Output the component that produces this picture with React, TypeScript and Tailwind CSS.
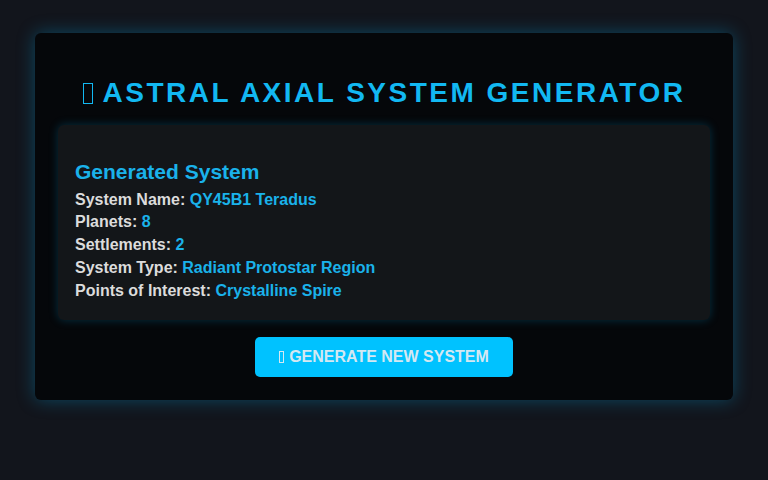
export default function App() {
  const rows = [
    { label: 'System Name:', value: 'QY45B1 Teradus' },
    { label: 'Planets:', value: '8' },
    { label: 'Settlements:', value: '2' },
    { label: 'System Type:', value: 'Radiant Protostar Region' },
    { label: 'Points of Interest:', value: 'Crystalline Spire' },
  ];

  return (
    <div className="min-h-[480px] w-[768px] bg-[#12151c] pt-[33px] font-['Liberation_Sans',Arial,sans-serif]">
      <div className="mx-auto w-[698px] rounded-[6px] bg-[#05070a] px-[23px] pt-[43px] pb-[23px] shadow-[0_0_18px_rgba(0,170,230,0.35)]">
        {/* Title */}
        <h1 className="flex h-[34px] items-center justify-center text-[28px] font-bold uppercase tracking-[2.5px] text-[#12b8f2]">
          <span className="mr-[10px] inline-block h-[21px] w-[10px] border-[1.5px] border-[#12b8f2]" />
          Astral Axial System Generator
        </h1>

        {/* Result panel */}
        <div className="mt-[15px] h-[195px] rounded-[6px] bg-[#131619] px-[17px] pt-[33px] shadow-[0_0_10px_rgba(0,170,230,0.25)]">
          <h2 className="h-[28px] text-[21px] leading-[28px] font-bold text-[#1ab2ea]">Generated System</h2>
          <div className="mt-[2.5px] text-[16px] leading-[22.75px] font-bold">
            {rows.map((r) => (
              <p key={r.label} className="text-[#dcdcdc]">
                {r.label} <span className="text-[#1ab2ea]">{r.value}</span>
              </p>
            ))}
          </div>
        </div>

        {/* Button */}
        <div className="mt-[17px] flex justify-center">
          <button className="flex h-[40px] w-[258px] items-center justify-center rounded-[5px] bg-[#00c2ff] text-[16px] font-bold uppercase text-[#d4e8f2]">
            <span className="mr-[5px] inline-block h-[12px] w-[5px] border border-[#d4e8f2]" />
            Generate New System
          </button>
        </div>
      </div>
    </div>
  );
}
